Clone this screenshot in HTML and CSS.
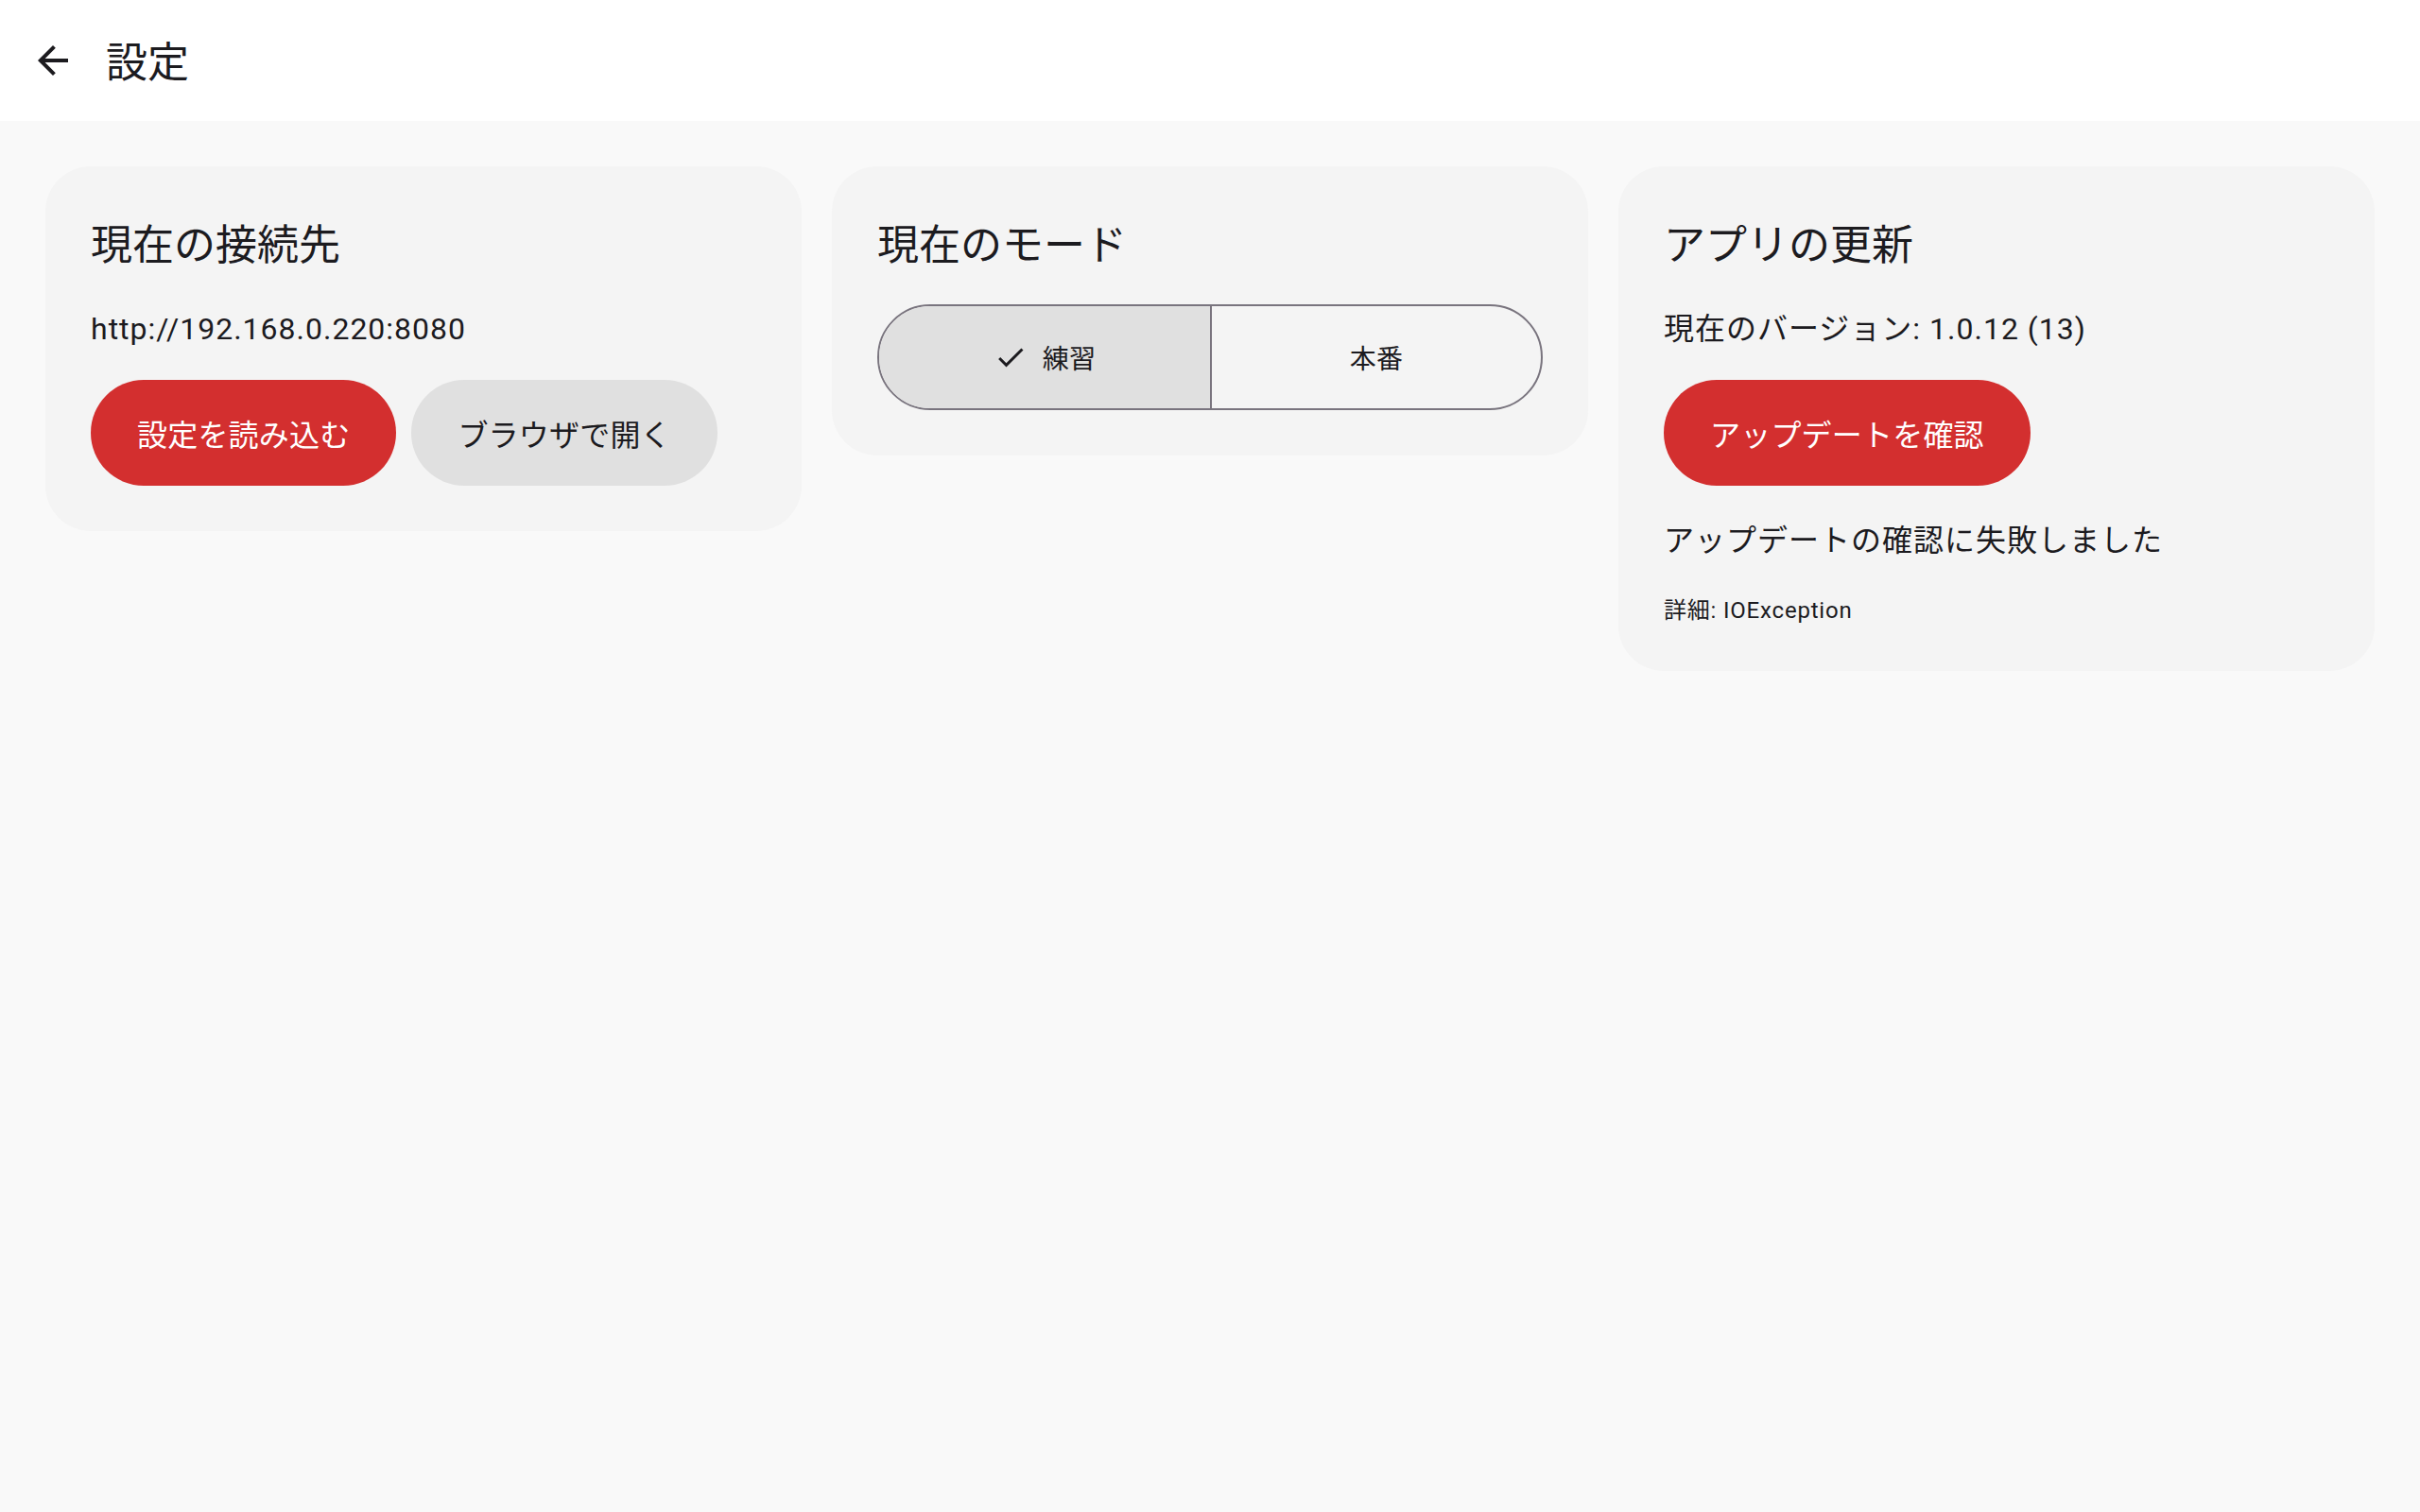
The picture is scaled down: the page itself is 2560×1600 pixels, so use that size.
FILE: index.html
```html
<!DOCTYPE html>
<html lang="ja">
<head>
<meta charset="utf-8">
<title>設定</title>
<link rel="stylesheet" href="styles.css">
</head>
<body>
<header class="topbar">
  <button class="icon-btn" aria-label="戻る">
    <svg class="icon" viewBox="0 0 24 24" width="48" height="48"><path d="M20 11H7.83l5.59-5.59L12 4l-8 8 8 8 1.41-1.41L7.83 13H20v-2z" fill="#1C1B1F"/></svg>
  </button>
  <h1 class="topbar-title">設定</h1>
</header>
<main class="content">
  <section class="card">
    <h2 class="card-title">現在の接続先</h2>
    <p class="body-text">http://192.168.0.220:8080</p>
    <div class="btn-row">
      <button class="btn btn-primary">設定を読み込む</button>
      <button class="btn btn-tonal">ブラウザで開く</button>
    </div>
  </section>
  <section class="card">
    <h2 class="card-title">現在のモード</h2>
    <div class="segmented">
      <button class="segment segment-selected">
        <svg class="check" viewBox="0 0 24 24" width="36" height="36"><path d="M9 16.17L4.83 12l-1.42 1.41L9 19 21 7l-1.41-1.41z" fill="#1C1B1F"/></svg>
        <span>練習</span>
      </button>
      <button class="segment">
        <span>本番</span>
      </button>
    </div>
  </section>
  <section class="card">
    <h2 class="card-title">アプリの更新</h2>
    <p class="body-text">現在のバージョン: 1.0.12 (13)</p>
    <div class="btn-row">
      <button class="btn btn-primary">アップデートを確認</button>
    </div>
    <p class="body-text error-text">アップデートの確認に失敗しました</p>
    <p class="small-text">詳細: IOException</p>
  </section>
</main>
</body>
</html>
```

FILE: styles.css
```css
* {
  box-sizing: border-box;
}

html, body {
  margin: 0;
  padding: 0;
}

body {
  background: #F9F9F9;
  color: #1C1B1F;
  font-family: Roboto, "Noto Sans CJK JP", sans-serif;
  width: 2560px;
  min-height: 1600px;
}

.topbar {
  height: 128px;
  background: #FFFFFF;
  display: flex;
  align-items: center;
}

.icon-btn {
  width: 96px;
  height: 96px;
  margin-left: 8px;
  border: none;
  background: transparent;
  padding: 0;
  display: flex;
  align-items: center;
  justify-content: center;
  border-radius: 50%;
}

.icon {
  display: block;
}

.topbar-title {
  margin: 0 0 0 8px;
  padding-top: 6px;
  font-size: 44px;
  line-height: 56px;
  font-weight: 400;
}

.content {
  display: grid;
  grid-template-columns: repeat(3, 800px);
  column-gap: 32px;
  padding: 48px;
  align-items: start;
}

.card {
  background: #F4F4F4;
  border-radius: 48px;
  padding: 48px;
  display: flex;
  flex-direction: column;
  align-items: flex-start;
}

.card-title {
  margin: 8px 0 34px 0;
  font-size: 44px;
  line-height: 56px;
  font-weight: 400;
}

.body-text {
  margin: 0;
  padding-top: 4px;
  font-size: 32px;
  line-height: 44px;
  letter-spacing: 1px;
}

.btn-row {
  display: flex;
  gap: 16px;
  margin-top: 32px;
}

.btn {
  height: 112px;
  padding: 0 49px;
  border: none;
  border-radius: 56px;
  font-family: Roboto, "Noto Sans CJK JP", sans-serif;
  font-size: 32px;
  letter-spacing: 0.2px;
  font-weight: 400;
}

.btn-primary {
  background: #D32F2F;
  color: #FFFFFF;
}

.btn-tonal {
  background: #E0E0E0;
  color: #1C1B1F;
}

.error-text {
  margin-top: 32px;
}

.small-text {
  margin: 36px 0 0 0;
  font-size: 24px;
  line-height: 32px;
  letter-spacing: 0.8px;
}

.segmented {
  align-self: stretch;
  display: grid;
  grid-template-columns: 1fr 1fr;
  height: 112px;
  border: 2px solid #79747E;
  border-radius: 56px;
  overflow: hidden;
}

.segment {
  border: none;
  background: transparent;
  display: flex;
  align-items: center;
  justify-content: center;
  gap: 16px;
  font-family: Roboto, "Noto Sans CJK JP", sans-serif;
  font-size: 28px;
  letter-spacing: 0.2px;
  color: #1C1B1F;
  padding: 0;
}

.segment + .segment {
  border-left: 2px solid #79747E;
}

.segment-selected {
  background: #E0E0E0;
}

.check {
  display: block;
}
```
